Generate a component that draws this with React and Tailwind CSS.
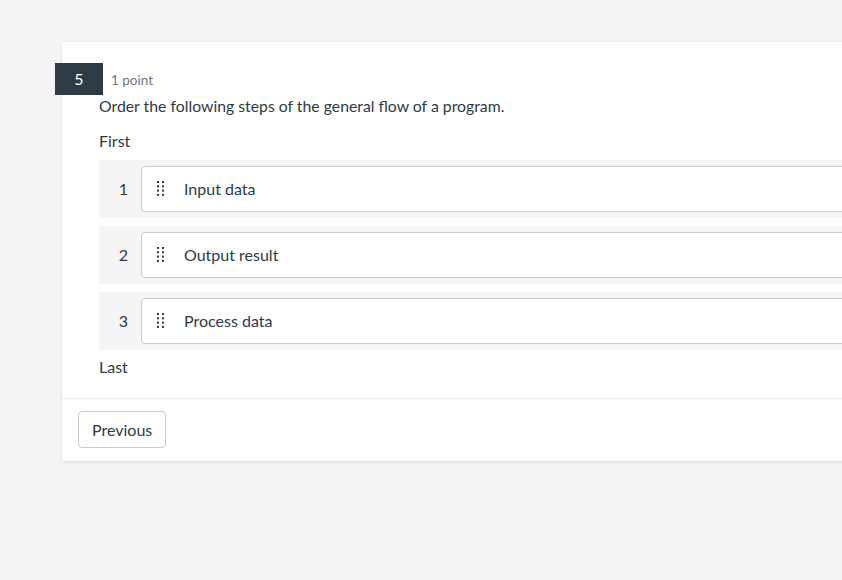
import React from "react";

function Dots() {
  return (
    <svg width="8" height="16" viewBox="0 0 8 16" className="shrink-0">
      {[0, 1, 2, 3].map((r) =>
        [0, 1].map((c) => (
          <rect key={`${r}-${c}`} x={c * 5} y={r * 4.3} width="2" height="2" fill="#2d3b45" />
        ))
      )}
    </svg>
  );
}

function Row({ n, label }) {
  return (
    <div className="flex items-center h-[58px] bg-[#f5f5f5] py-[6px]">
      <div className="w-[42px] shrink-0 pr-[13px] text-right text-[16px] text-[#2d3b45]">{n}</div>
      <div className="flex-1 h-[46px] bg-white border border-[#c7cdd1] rounded-[4px] flex items-center pl-[15px]">
        <Dots />
        <span className="ml-[19px] text-[16px] text-[#2d3b45]">{label}</span>
      </div>
    </div>
  );
}

export default function App() {
  return (
    <div
      className="w-[842px] h-[580px] overflow-hidden bg-[#f5f5f5] pt-[42px] pl-[62px]"
      style={{ fontFamily: "Lato, 'Liberation Sans', sans-serif" }}
    >
      <div className="w-[900px] bg-white shadow-[0_1px_3px_rgba(0,0,0,0.12)]">
        <div className="pt-[21px]">
          <div className="flex items-center h-[32px]">
            <div className="-ml-[7px] w-[48px] h-[32px] bg-[#2d3b45] text-white text-[16px] flex items-center justify-center">
              5
            </div>
            <div className="ml-[8px] text-[13.5px] text-[#6b7780] mt-[3px]">1 point</div>
          </div>
          <div className="pl-[37px]">
            <div className="text-[15.8px] leading-[22px] text-[#2d3b45]">
              Order the following steps of the general flow of a program.
            </div>
            <div className="text-[16px] leading-[22px] text-[#2d3b45] mt-[13px] mb-[8px]">First</div>
            <div className="flex flex-col gap-[8px]">
              <Row n="1" label="Input data" />
              <Row n="2" label="Output result" />
              <Row n="3" label="Process data" />
            </div>
            <div className="text-[16px] leading-[22px] text-[#2d3b45] mt-[6px] pb-[20px]">Last</div>
          </div>
        </div>
        <div className="border-t border-[#eeeeee] pt-[12px] pb-[13px] pl-[16px]">
          <button className="h-[37px] px-[13px] border border-[#c7cdd1] rounded-[4px] bg-white text-[16px] text-[#2d3b45]">
            Previous
          </button>
        </div>
      </div>
    </div>
  );
}
